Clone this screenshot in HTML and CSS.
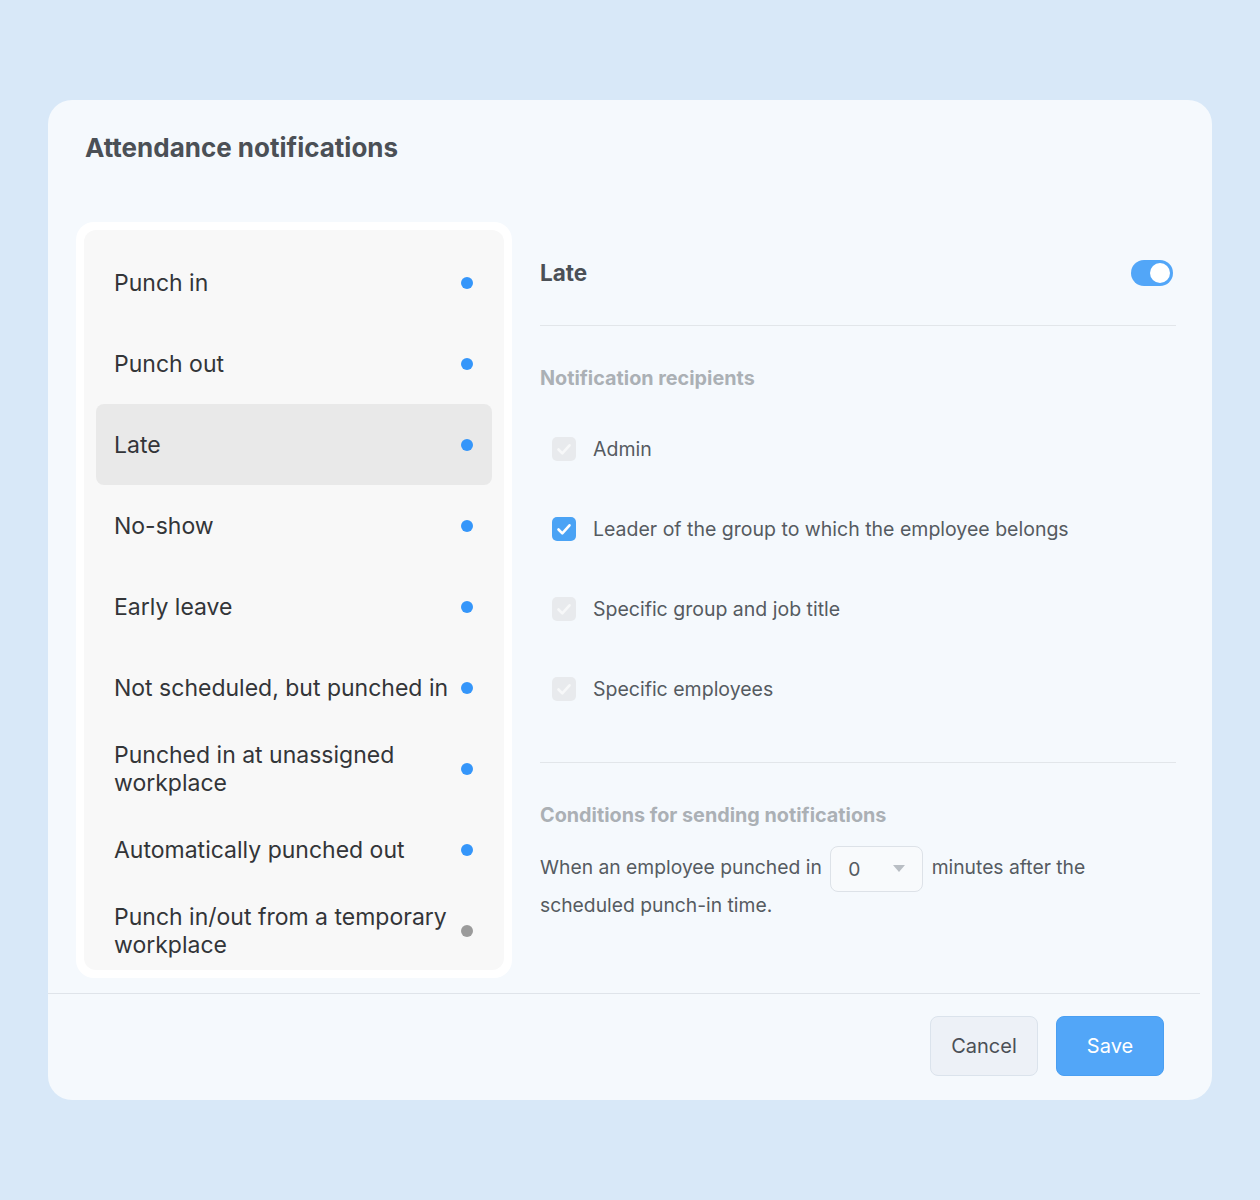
FILE: index.html
```html
<!DOCTYPE html>
<html>
<head>
<meta charset="utf-8">
<link rel="stylesheet" href="styles.css">
</head>
<body>
<div class="card">
  <h1 class="title">Attendance notifications</h1>
  <div class="body">
    <div class="list-outer">
      <div class="list">
        <div class="item"><span>Punch in</span><i class="dot"></i></div>
        <div class="item"><span>Punch out</span><i class="dot"></i></div>
        <div class="item active"><span>Late</span><i class="dot"></i></div>
        <div class="item"><span>No-show</span><i class="dot"></i></div>
        <div class="item"><span>Early leave</span><i class="dot"></i></div>
        <div class="item"><span>Not scheduled, but punched in</span><i class="dot"></i></div>
        <div class="item"><span>Punched in at unassigned workplace</span><i class="dot"></i></div>
        <div class="item"><span>Automatically punched out</span><i class="dot"></i></div>
        <div class="item"><span>Punch in/out from a temporary workplace</span><i class="dot off"></i></div>
      </div>
    </div>
    <div class="pane">
      <div class="pane-head">
        <h2 class="pane-title">Late</h2>
        <span class="toggle"><span class="knob"></span></span>
      </div>
      <div class="section">
        <h3 class="sec-title">Notification recipients</h3>
        <div class="checks">
          <label class="check"><span class="box disabled"><svg viewBox="0 0 24 24"><path d="M6.5 12.5l3.8 3.8 7.2-8" /></svg></span><span>Admin</span></label>
          <label class="check"><span class="box on"><svg viewBox="0 0 24 24"><path d="M6.5 12.5l3.8 3.8 7.2-8" /></svg></span><span>Leader of the group to which the employee belongs</span></label>
          <label class="check"><span class="box disabled"><svg viewBox="0 0 24 24"><path d="M6.5 12.5l3.8 3.8 7.2-8" /></svg></span><span>Specific group and job title</span></label>
          <label class="check"><span class="box disabled"><svg viewBox="0 0 24 24"><path d="M6.5 12.5l3.8 3.8 7.2-8" /></svg></span><span>Specific employees</span></label>
        </div>
      </div>
      <div class="section cond">
        <h3 class="sec-title">Conditions for sending notifications</h3>
        <p class="cond-text">When an employee punched in <span class="select"><span>0</span><i class="caret"></i></span> minutes after the scheduled punch-in time.</p>
      </div>
    </div>
  </div>
  <div class="footer">
    <button class="btn cancel">Cancel</button>
    <button class="btn save">Save</button>
  </div>
</div>
</body>
</html>
```
FILE: styles.css
```css
* { box-sizing: border-box; }
html, body { margin: 0; padding: 0; }
body {
  background: #d8e8f8;
  font-family: Inter, "Noto Sans", sans-serif;
  width: 1260px;
  height: 1200px;
  overflow: hidden;
}
.card {
  margin: 100px 48px 0;
  width: 1164px;
  height: 1000px;
  border-radius: 24px;
  background: #f5f9fd;
  display: flex;
  flex-direction: column;
}
.title {
  margin: 0;
  padding: 33px 0 0 37px;
  font-size: 26px;
  line-height: 30px;
  font-weight: 700;
  color: #4b5056;
}
.body {
  display: flex;
  gap: 28px;
  padding: 0 36px 0 28px;
  margin-top: 59px;
}
.list-outer {
  width: 436px;
  height: 756px;
  flex: none;
  background: #ffffff;
  border-radius: 18px;
  padding: 8px;
}
.list {
  height: 740px;
  background: #f8f8f8;
  border-radius: 12px;
  padding: 12px 12px 0;
  overflow: hidden;
}
.item {
  height: 81px;
  display: flex;
  align-items: center;
  justify-content: space-between;
  padding: 0 19px 0 18px;
  border-radius: 8px;
  font-size: 23px;
  line-height: 28px;
  color: #333538;
}
.item span { max-width: 340px; }
.item.active { background: #e9e9e9; }
.dot {
  width: 12px;
  height: 12px;
  border-radius: 50%;
  background: #3596fa;
  flex: none;
}
.dot.off { background: #9b9b9b; }
.pane {
  flex: 1;
  display: flex;
  flex-direction: column;
}
.pane-head {
  height: 104px;
  display: flex;
  align-items: center;
  justify-content: space-between;
  border-bottom: 1px solid #e2e6ea;
}
.pane-title {
  margin: 0;
  margin-top: -2px;
  font-size: 22.5px;
  font-weight: 700;
  color: #4b5056;
}
.toggle {
  width: 42px;
  height: 26px;
  margin-right: 3px;
  margin-top: -2px;
  border-radius: 13px;
  background: #52a6f8;
  display: flex;
  align-items: center;
  justify-content: flex-end;
  padding: 3px;
}
.knob {
  width: 20px;
  height: 20px;
  border-radius: 50%;
  background: #ffffff;
}
.section {
  padding-top: 40px;
}
.sec-title {
  margin: 0;
  font-size: 19.8px;
  line-height: 24px;
  font-weight: 700;
  color: #abb0b5;
}
.checks {
  margin-top: 19px;
  padding-bottom: 33px;
  border-bottom: 1px solid #e2e6ea;
}
.check {
  height: 80px;
  display: flex;
  align-items: center;
  gap: 17px;
  padding-left: 12px;
  font-size: 19.5px;
  color: #555b61;
}
.box {
  width: 24px;
  height: 24px;
  border-radius: 5px;
  display: flex;
  align-items: center;
  justify-content: center;
  flex: none;
}
.box svg { width: 24px; height: 24px; fill: none; stroke: #fff; stroke-width: 2.6; stroke-linecap: round; stroke-linejoin: round; }
.box.disabled { background: #e8eaed; }
.box.disabled svg { stroke: #f7f8f9; }
.box.on { background: #4aa3f5; }
.cond-text {
  margin: 21px 0 0;
  font-size: 19.3px;
  line-height: 38px;
  color: #555b61;
}
.select {
  display: inline-flex;
  align-items: center;
  justify-content: space-between;
  width: 93px;
  height: 46px;
  margin: -6px 3px;
  vertical-align: middle;
  padding: 0 17px 0 17px;
  border: 1.5px solid #dde2e8;
  border-radius: 8px;
  background: #f8fafc;
  color: #555b61;
}
.caret {
  width: 0;
  height: 0;
  border-left: 6px solid transparent;
  border-right: 6px solid transparent;
  border-top: 7px solid #b9bec4;
}
.footer {
  margin-top: 15px;
  width: 1152px;
  border-top: 1.5px solid #dfe4ea;
  display: flex;
  justify-content: flex-end;
  gap: 18px;
  padding: 22px 36px 0 0;
}
.btn {
  width: 108px;
  height: 60px;
  border-radius: 8px;
  font-family: Inter, "Noto Sans", sans-serif;
  font-size: 20px;
  cursor: pointer;
}
.cancel {
  background: #edf1f7;
  border: 1.5px solid #dbe3ec;
  color: #4b5056;
}
.save {
  background: #52a6f8;
  border: 1.5px solid #4a9ff2;
  color: #ffffff;
}
```
